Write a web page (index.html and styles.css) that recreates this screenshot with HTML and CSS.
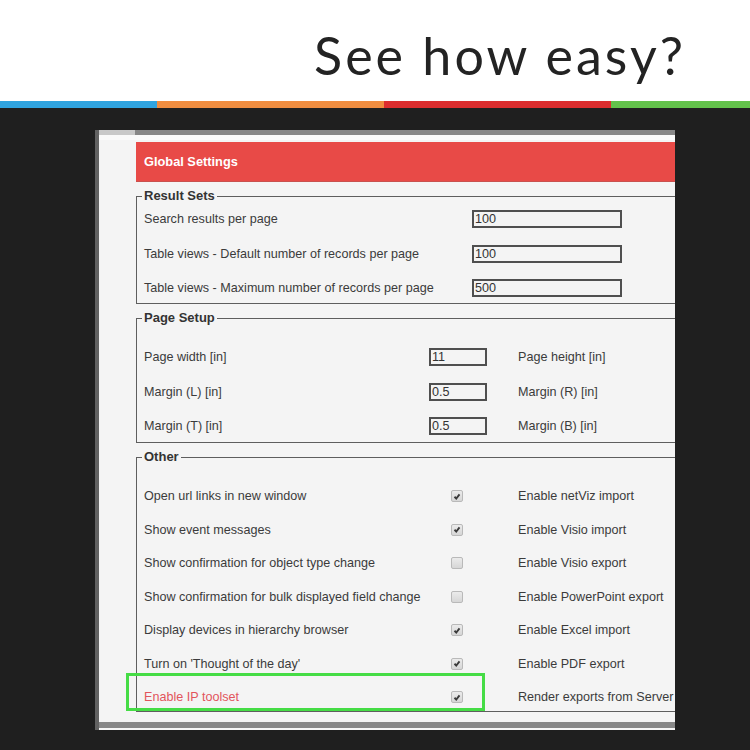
FILE: index.html
```html
<!DOCTYPE html>
<html lang="en">
<head>
    <meta charset="UTF-8">
    <title>See how easy?</title>
    <link rel="stylesheet" href="styles.css">
</head>
<body>
    <div class="banner">
        <h1>See how easy?</h1>
    </div>

    <div class="stripes">
        <div class="stripe blue"></div>
        <div class="stripe orange"></div>
        <div class="stripe red"></div>
        <div class="stripe green"></div>
    </div>

    <div class="stage">
        <div class="window">
            <div class="window-top"></div>
            <div class="content">
                <div class="panel-title">Global Settings</div>

                <fieldset class="group">
                    <legend>Result Sets</legend>
                    <div class="rows">
                        <div class="row result-row">
                            <span class="label">Search results per page</span>
                            <input class="field wide" type="text" value="100">
                        </div>
                        <div class="row result-row">
                            <span class="label">Table views - Default number of records per page</span>
                            <input class="field wide" type="text" value="100">
                        </div>
                        <div class="row result-row">
                            <span class="label">Table views - Maximum number of records per page</span>
                            <input class="field wide" type="text" value="500">
                        </div>
                    </div>
                </fieldset>

                <fieldset class="group setup">
                    <legend>Page Setup</legend>
                    <div class="rows">
                        <div class="row setup-row">
                            <span class="label">Page width [in]</span>
                            <input class="field narrow" type="text" value="11">
                            <span class="label side">Page height [in]</span>
                        </div>
                        <div class="row setup-row">
                            <span class="label">Margin (L) [in]</span>
                            <input class="field narrow" type="text" value="0.5">
                            <span class="label side">Margin (R) [in]</span>
                        </div>
                        <div class="row setup-row">
                            <span class="label">Margin (T) [in]</span>
                            <input class="field narrow" type="text" value="0.5">
                            <span class="label side">Margin (B) [in]</span>
                        </div>
                    </div>
                </fieldset>

                <fieldset class="group other">
                    <legend>Other</legend>
                    <div class="rows tight">
                        <div class="row other-row">
                            <span class="label">Open url links in new window</span>
                            <span class="check on"><svg viewBox="0 0 12 12"><path d="M3 6.3 L5.1 8.5 L9 3.4"/></svg></span>
                            <span class="label side">Enable netViz import</span>
                        </div>
                        <div class="row other-row">
                            <span class="label">Show event messages</span>
                            <span class="check on"><svg viewBox="0 0 12 12"><path d="M3 6.3 L5.1 8.5 L9 3.4"/></svg></span>
                            <span class="label side">Enable Visio import</span>
                        </div>
                        <div class="row other-row">
                            <span class="label">Show confirmation for object type change</span>
                            <span class="check"></span>
                            <span class="label side">Enable Visio export</span>
                        </div>
                        <div class="row other-row">
                            <span class="label">Show confirmation for bulk displayed field change</span>
                            <span class="check"></span>
                            <span class="label side">Enable PowerPoint export</span>
                        </div>
                        <div class="row other-row">
                            <span class="label">Display devices in hierarchy browser</span>
                            <span class="check on"><svg viewBox="0 0 12 12"><path d="M3 6.3 L5.1 8.5 L9 3.4"/></svg></span>
                            <span class="label side">Enable Excel import</span>
                        </div>
                        <div class="row other-row">
                            <span class="label">Turn on 'Thought of the day'</span>
                            <span class="check on"><svg viewBox="0 0 12 12"><path d="M3 6.3 L5.1 8.5 L9 3.4"/></svg></span>
                            <span class="label side">Enable PDF export</span>
                        </div>
                        <div class="row other-row marked">
                            <span class="label alert">Enable IP toolset</span>
                            <span class="check on"><svg viewBox="0 0 12 12"><path d="M3 6.3 L5.1 8.5 L9 3.4"/></svg></span>
                            <span class="label side">Render exports from Server</span>
                            <span class="highlight"></span>
                        </div>
                    </div>
                </fieldset>
            </div>
            <div class="window-foot"></div>
        </div>
    </div>
</body>
</html>
```

FILE: styles.css
```css
* {
    margin: 0;
    padding: 0;
    box-sizing: border-box;
}

body {
    width: 750px;
    height: 750px;
    overflow: hidden;
    background: #1f1f1f;
    font-family: "Liberation Sans", Arial, sans-serif;
}

/* banner */

.banner {
    height: 101px;
    background: #ffffff;
    padding: 29px 64px 0 0;
    text-align: right;
}

.banner h1 {
    font-family: Lato, "Open Sans", sans-serif;
    font-weight: 400;
    font-size: 52px;
    line-height: 52px;
    letter-spacing: 3px;
    color: #232323;
}

.stripes {
    display: flex;
    height: 7px;
}

.stripe.blue { width: 157px; background: #2fa4e0; }
.stripe.orange { width: 227px; background: #f08d40; }
.stripe.red { width: 227px; background: #dc2d2e; }
.stripe.green { flex: 1; background: #63c24b; }

/* screenshot area */

.stage {
    height: 642px;
    padding: 22px 0 0 95px;
}

.window {
    width: 580px;
    height: 600px;
    display: flex;
    flex-direction: column;
    background: #f4f4f4;
    border-left: 4px solid #626262;
    overflow: hidden;
}

.window-top {
    flex: none;
    height: 10px;
    background: linear-gradient(90deg, #c9c9c9 36px, #878787 36px);
    border-bottom: 5px solid #fafafa;
}

.window-foot {
    flex: none;
    margin-top: auto;
    height: 8px;
    background: #878787;
    border-bottom: 2px solid #f6f6f6;
}

.content {
    width: 700px;
    padding: 2px 0 0 37px;
}

.panel-title {
    height: 40px;
    display: flex;
    align-items: center;
    padding-left: 8px;
    background: #e84a47;
    border-bottom: 1px solid #c9514e;
    color: #ffffff;
    font-size: 12.8px;
    font-weight: 700;
}

/* fieldsets */

.group {
    width: 620px;
    margin-top: 7px;
    padding: 6px 7px 5px;
    border: 1px solid #5e5e5e;
}

.group.setup,
.group.other {
    padding-top: 22px;
}

.group.setup {
    padding-bottom: 6px;
}

.group.other {
    padding-bottom: 4px;
}

.group legend {
    margin-left: -2px;
    padding: 0 2px;
    font-size: 13px;
    line-height: 14px;
    font-weight: 700;
    color: #333333;
}

.rows {
    display: flex;
    flex-direction: column;
    gap: 14.5px;
}

.rows.tight {
    gap: 13.5px;
}

.row {
    display: grid;
    align-items: center;
    height: 20px;
}

.result-row {
    grid-template-columns: 328px 150px;
}

.setup-row {
    grid-template-columns: 285px 58px auto;
}

.other-row {
    grid-template-columns: 307px 12px auto;
}

.label {
    font-size: 12.6px;
    color: #3b3b3b;
    white-space: nowrap;
}

.setup-row .side {
    padding-left: 31px;
}

.other-row .side {
    padding-left: 55px;
}

.label.alert {
    color: #e2545c;
}

.field {
    height: 18px;
    padding: 0 1px;
    border: 2px solid #4f4f4f;
    background: #f4f4f4;
    font-family: "Liberation Sans", Arial, sans-serif;
    font-size: 12.6px;
    color: #333333;
    outline: none;
}

.field.wide {
    width: 150px;
}

.field.narrow {
    width: 58px;
}

.check {
    width: 12px;
    height: 12px;
    border: 1px solid #b9b9b9;
    border-radius: 2px;
    background: linear-gradient(#ebebeb, #d6d6d6);
    display: flex;
    align-items: center;
    justify-content: center;
}

.check svg {
    width: 11px;
    height: 11px;
}

.check path {
    fill: none;
    stroke: #3a3a3a;
    stroke-width: 2.2;
}

.marked {
    position: relative;
}

.highlight {
    position: absolute;
    left: -18px;
    top: -14px;
    width: 359px;
    height: 38px;
    border: 3px solid #45dc45;
}
```
